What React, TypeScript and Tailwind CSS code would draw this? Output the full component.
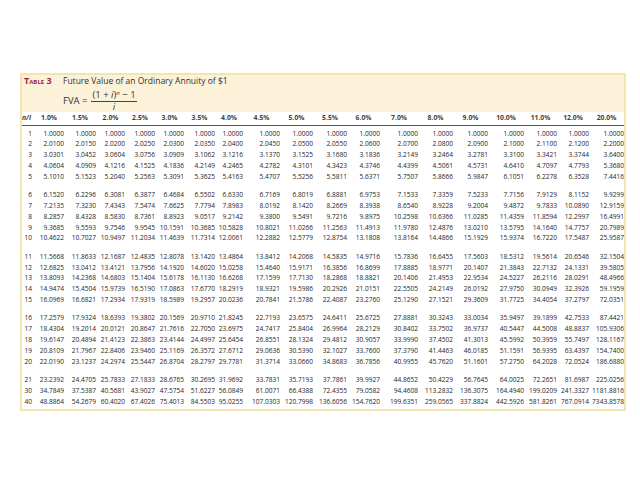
import React from "react";

const RATES = [
  "1.0%", "1.5%", "2.0%", "2.5%", "3.0%", "3.5%", "4.0%", "4.5%", "5.0%",
  "5.5%", "6.0%", "7.0%", "8.0%", "9.0%", "10.0%", "11.0%", "12.0%", "20.0%",
];

// each line: period, then one value per rate
const GROUPS: string[][] = [
  [
    "1 1.0000 1.0000 1.0000 1.0000 1.0000 1.0000 1.0000 1.0000 1.0000 1.0000 1.0000 1.0000 1.0000 1.0000 1.0000 1.0000 1.0000 1.0000",
    "2 2.0100 2.0150 2.0200 2.0250 2.0300 2.0350 2.0400 2.0450 2.0500 2.0550 2.0600 2.0700 2.0800 2.0900 2.1000 2.1100 2.1200 2.2000",
    "3 3.0301 3.0452 3.0604 3.0756 3.0909 3.1062 3.1216 3.1370 3.1525 3.1680 3.1836 3.2149 3.2464 3.2781 3.3100 3.3421 3.3744 3.6400",
    "4 4.0604 4.0909 4.1216 4.1525 4.1836 4.2149 4.2465 4.2782 4.3101 4.3423 4.3746 4.4399 4.5061 4.5731 4.6410 4.7097 4.7793 5.3680",
    "5 5.1010 5.1523 5.2040 5.2563 5.3091 5.3625 5.4163 5.4707 5.5256 5.5811 5.6371 5.7507 5.8666 5.9847 6.1051 6.2278 6.3528 7.4416",
  ],
  [
    "6 6.1520 6.2296 6.3081 6.3877 6.4684 6.5502 6.6330 6.7169 6.8019 6.8881 6.9753 7.1533 7.3359 7.5233 7.7156 7.9129 8.1152 9.9299",
    "7 7.2135 7.3230 7.4343 7.5474 7.6625 7.7794 7.8983 8.0192 8.1420 8.2669 8.3938 8.6540 8.9228 9.2004 9.4872 9.7833 10.0890 12.9159",
    "8 8.2857 8.4328 8.5830 8.7361 8.8923 9.0517 9.2142 9.3800 9.5491 9.7216 9.8975 10.2598 10.6366 11.0285 11.4359 11.8594 12.2997 16.4991",
    "9 9.3685 9.5593 9.7546 9.9545 10.1591 10.3685 10.5828 10.8021 11.0266 11.2563 11.4913 11.9780 12.4876 13.0210 13.5795 14.1640 14.7757 20.7989",
    "10 10.4622 10.7027 10.9497 11.2034 11.4639 11.7314 12.0061 12.2882 12.5779 12.8754 13.1808 13.8164 14.4866 15.1929 15.9374 16.7220 17.5487 25.9587",
  ],
  [
    "11 11.5668 11.8633 12.1687 12.4835 12.8078 13.1420 13.4864 13.8412 14.2068 14.5835 14.9716 15.7836 16.6455 17.5603 18.5312 19.5614 20.6546 32.1504",
    "12 12.6825 13.0412 13.4121 13.7956 14.1920 14.6020 15.0258 15.4640 15.9171 16.3856 16.8699 17.8885 18.9771 20.1407 21.3843 22.7132 24.1331 39.5805",
    "13 13.8093 14.2368 14.6803 15.1404 15.6178 16.1130 16.6268 17.1599 17.7130 18.2868 18.8821 20.1406 21.4953 22.9534 24.5227 26.2116 28.0291 48.4966",
    "14 14.9474 15.4504 15.9739 16.5190 17.0863 17.6770 18.2919 18.9321 19.5986 20.2926 21.0151 22.5505 24.2149 26.0192 27.9750 30.0949 32.3926 59.1959",
    "15 16.0969 16.6821 17.2934 17.9319 18.5989 19.2957 20.0236 20.7841 21.5786 22.4087 23.2760 25.1290 27.1521 29.3609 31.7725 34.4054 37.2797 72.0351",
  ],
  [
    "16 17.2579 17.9324 18.6393 19.3802 20.1569 20.9710 21.8245 22.7193 23.6575 24.6411 25.6725 27.8881 30.3243 33.0034 35.9497 39.1899 42.7533 87.4421",
    "17 18.4304 19.2014 20.0121 20.8647 21.7616 22.7050 23.6975 24.7417 25.8404 26.9964 28.2129 30.8402 33.7502 36.9737 40.5447 44.5008 48.8837 105.9306",
    "18 19.6147 20.4894 21.4123 22.3863 23.4144 24.4997 25.6454 26.8551 28.1324 29.4812 30.9057 33.9990 37.4502 41.3013 45.5992 50.3959 55.7497 128.1167",
    "19 20.8109 21.7967 22.8406 23.9460 25.1169 26.3572 27.6712 29.0636 30.5390 32.1027 33.7600 37.3790 41.4463 46.0185 51.1591 56.9395 63.4397 154.7400",
    "20 22.0190 23.1237 24.2974 25.5447 26.8704 28.2797 29.7781 31.3714 33.0660 34.8683 36.7856 40.9955 45.7620 51.1601 57.2750 64.2028 72.0524 186.6880",
  ],
  [
    "21 23.2392 24.4705 25.7833 27.1833 28.6765 30.2695 31.9692 33.7831 35.7193 37.7861 39.9927 44.8652 50.4229 56.7645 64.0025 72.2651 81.6987 225.0256",
    "30 34.7849 37.5387 40.5681 43.9027 47.5754 51.6227 56.0849 61.0071 66.4388 72.4355 79.0582 94.4608 113.2832 136.3075 164.4940 199.0209 241.3327 1181.8816",
    "40 48.8864 54.2679 60.4020 67.4026 75.4013 84.5503 95.0255 107.0303 120.7998 136.6056 154.7620 199.6351 259.0565 337.8824 442.5926 581.8261 767.0914 7343.8578",
  ],
];

const GRID =
  "grid grid-cols-[12px_30px_32px_29px_30px_29px_31px_28px_37px_33px_34px_33px_38px_35px_35px_36px_33px_32px_35px]";

function Formula() {
  return (
    <div className="flex items-center pl-[41px] mt-[4px] text-[9.5px] text-[#333]">
      <span className="mr-[4px]">FVA =</span>
      <div className="flex flex-col items-center">
        <div className="leading-[10px] border-b border-[#444] pb-[1px] px-[1px]">
          (1 + <i>i</i>)<sup className="text-[6px] italic">n</sup> − 1
        </div>
        <div className="leading-[10px] italic">i</div>
      </div>
    </div>
  );
}

export default function App() {
  return (
    <div className="min-h-[499px] bg-white pt-[73px] pl-[20px] font-['Open_Sans',sans-serif]">
      <div className="w-[606px] border-2 border-[#f4e4b0]">
        <div className="bg-[#fcf2da] h-[37px]">
          <div className="flex items-baseline pl-[2px] pt-[1px] leading-[10px]">
            <span className="w-[39px] text-[9px] font-bold text-[#9d2744] [font-variant-caps:small-caps]">
              Table 3
            </span>
            <span className="text-[8.5px] text-[#333]">
              Future Value of an Ordinary Annuity of $1
            </span>
          </div>
          <Formula />
        </div>

        <div className={`${GRID} h-[14px] items-center border-b border-[#555] text-[6.8px] font-bold text-[#3f3f3f]`}>
          <div className="italic">n/i</div>
          {RATES.map((r) => (
            <div key={r} className="text-center">
              {r}
            </div>
          ))}
        </div>

        <div className="flex flex-col gap-[7.6px] pt-[2.6px] pb-[2px] text-[6.6px] text-[#262626]">
          {GROUPS.map((group, gi) => (
            <div key={gi}>
              {group.map((line) => {
                const [n, ...vals] = line.split(" ");
                return (
                  <div key={n} className={`${GRID} h-[10.8px] leading-[10.8px]`}>
                    <div className="text-right pr-[2px]">{n}</div>
                    {vals.map((v, i) => (
                      <div key={i} className="flex justify-end whitespace-nowrap">
                        {v}
                      </div>
                    ))}
                  </div>
                );
              })}
            </div>
          ))}
        </div>
      </div>
    </div>
  );
}
